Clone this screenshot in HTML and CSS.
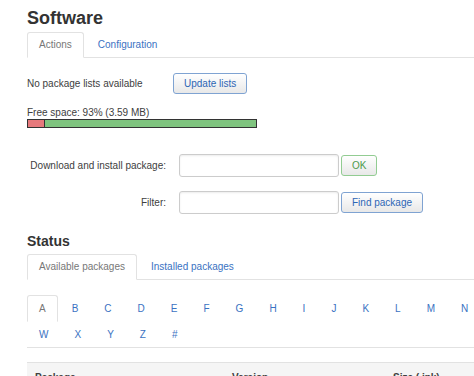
FILE: index.html
```html
<!DOCTYPE html>
<html>
<head>
<meta charset="utf-8">
<title>Software</title>
<link rel="stylesheet" href="styles.css">
</head>
<body>
<div id="maincontent">
    <h2 class="title">Software</h2>
    <ul class="tabs">
        <li class="active"><a href="#">Actions</a></li>
        <li><a href="#">Configuration</a></li>
    </ul>

    <div class="listRow">
        <span class="listInfo">No package lists available</span>
        <button class="btn blue">Update lists</button>
    </div>

    <div class="freeLabel">Free space: 93% (3.59 MB)</div>
    <div class="freeBar">
        <div class="used"></div>
        <div class="free"></div>
    </div>

    <div class="formRow first">
        <label class="formLabel">Download and install package:</label>
        <input class="textInput" type="text">
        <button class="btn green">OK</button>
    </div>
    <div class="formRow">
        <label class="formLabel">Filter:</label>
        <input class="textInput" type="text">
        <button class="btn blue">Find package</button>
    </div>

    <h3 class="subtitle">Status</h3>
    <ul class="tabs">
        <li class="active"><a href="#">Available packages</a></li>
        <li><a href="#">Installed packages</a></li>
    </ul>

    <ul class="tabs letters">
        <li class="active"><a href="#">A</a></li>
        <li><a href="#">B</a></li>
        <li><a href="#">C</a></li>
        <li><a href="#">D</a></li>
        <li><a href="#">E</a></li>
        <li><a href="#">F</a></li>
        <li><a href="#">G</a></li>
        <li><a href="#">H</a></li>
        <li><a href="#">I</a></li>
        <li><a href="#">J</a></li>
        <li><a href="#">K</a></li>
        <li><a href="#">L</a></li>
        <li><a href="#">M</a></li>
        <li><a href="#">N</a></li>
        <li><a href="#">O</a></li>
        <li><a href="#">P</a></li>
        <li><a href="#">Q</a></li>
        <li><a href="#">R</a></li>
        <li><a href="#">S</a></li>
        <li><a href="#">T</a></li>
        <li><a href="#">U</a></li>
        <li><a href="#">V</a></li>
        <li><a href="#">W</a></li>
        <li><a href="#">X</a></li>
        <li><a href="#">Y</a></li>
        <li><a href="#">Z</a></li>
        <li><a href="#">#</a></li>
    </ul>

    <table class="packages">
        <tr>
            <th class="colName">Package</th>
            <th class="colVersion">Version</th>
            <th>Size (.ipk)</th>
            <th>Description</th>
        </tr>
    </table>
</div>
</body>
</html>
```

FILE: styles.css
```css
html, body{
    margin: 0;
    padding: 0;
    overflow: hidden;
    background: #fff;
}
body{
    font-family: "Liberation Sans", Arial, sans-serif;
    font-size: 10px;
    color: #404040;
}
#maincontent{
    width: 740px;
    padding-left: 27px;
}
a{
    color: #3a72c2;
    text-decoration: none;
}
.title{
    margin: 7px 0 0 0;
    font-size: 18px;
    line-height: 22px;
    color: #333;
}
.subtitle{
    margin: 19px 0 0 0;
    font-size: 14px;
    line-height: 17px;
    color: #333;
}
.tabs{
    display: flex;
    flex-wrap: wrap;
    list-style: none;
    margin: 3px 0 0 0;
    padding: 0;
    border-bottom: 1px solid #e2e2e2;
}
.subtitle + .tabs{
    margin-top: 4px;
}
.tabs li{
    margin-right: 2px;
}
.tabs a{
    display: block;
    padding: 5px 11px 5px;
    line-height: 14px;
    border: 1px solid transparent;
    border-radius: 3px 3px 0 0;
    margin-bottom: -1px;
}
.tabs .active a{
    color: #777;
    background: #fff;
    border-color: #e2e2e2 #e2e2e2 transparent;
}
.tabs.letters{
    margin-top: 15px;
}
.tabs.letters a{
    padding: 6px 11px 5px;
}
.listRow{
    display: flex;
    align-items: center;
    margin-top: 15px;
}
.listInfo{
    width: 146px;
}
.btn{
    height: 21px;
    padding: 0 10px;
    font-family: inherit;
    font-size: 10px;
    border: 1px solid #7fa3d2;
    border-radius: 3px;
    background: linear-gradient(#fff, #e8e8e8);
    cursor: pointer;
}
.btn.blue{
    color: #2d66b5;
}
.btn.green{
    color: #4d9a4d;
    border-color: #92cc92;
}
.freeLabel{
    margin-top: 13px;
    line-height: 12px;
}
.freeBar{
    display: flex;
    width: 228px;
    height: 7px;
    border: 1px solid #333;
}
.freeBar .used{
    width: 16px;
    background: #e6797c;
    border-right: 1px solid #333;
}
.freeBar .free{
    flex: 1;
    background: #7fc47f;
}
.formRow{
    display: flex;
    align-items: center;
    margin-top: 14px;
}
.formRow.first{
    margin-top: 26px;
}
.formLabel{
    width: 139px;
    margin-right: 13px;
    text-align: right;
}
.textInput{
    box-sizing: border-box;
    width: 160px;
    height: 23px;
    margin: 0 2px 0 0;
    border: 1px solid #ccc;
    border-radius: 3px;
    box-shadow: inset 0 1px 2px rgba(0,0,0,0.08);
}
.packages{
    width: 740px;
    margin-top: 14px;
    border-collapse: collapse;
}
.packages th{
    padding: 8px 8px 6px;
    line-height: 14px;
    text-align: left;
    background: #f5f5f5;
    border-top: 1px solid #e2e2e2;
}
.packages .colName{
    width: 181px;
}
.packages .colVersion{
    width: 145px;
}
```
